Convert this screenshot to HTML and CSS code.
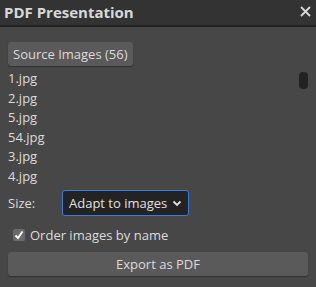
FILE: index.html
```html
<!DOCTYPE html>
<html lang="en">
<head>
<meta charset="UTF-8">
<meta name="viewport" content="width=device-width, initial-scale=1.0">
<title>PDF Presentation</title>
<link rel="stylesheet" href="styles.css">
</head>
<body>
<div class="panel">
    <div class="titlebar">
        <span class="title">PDF Presentation</span>
        <svg class="close" width="11" height="11" viewBox="0 0 11 11"><path d="M1 1L10 10M10 1L1 10" stroke="#d8d8d8" stroke-width="1.8"/></svg>
    </div>
    <div class="content">
        <button class="btn source">Source Images (56)</button>
        <div class="files">
            <div>1.jpg</div>
            <div>2.jpg</div>
            <div>5.jpg</div>
            <div>54.jpg</div>
            <div>3.jpg</div>
            <div>4.jpg</div>
            <span class="thumb"></span>
        </div>
        <div class="row">
            <label class="size-label">Size:</label>
            <div class="select">
                <span>Adapt to images</span>
                <svg width="10" height="7" viewBox="0 0 10 7"><path d="M1.5 1.5L5 5L8.5 1.5" fill="none" stroke="#e0e0e0" stroke-width="1.8"/></svg>
            </div>
        </div>
        <label class="check">
            <span class="box"><svg width="10" height="10" viewBox="0 0 10 10"><path d="M1.5 5.5L4 8L8.5 1.5" fill="none" stroke="#fff" stroke-width="1.8"/></svg></span>
            Order images by name
        </label>
        <button class="btn export">Export as PDF</button>
    </div>
</div>
</body>
</html>
```
FILE: styles.css
```css
body {
    margin: 0;
    background-color: #474747;
    font-family: 'Open Sans', 'DejaVu Sans', sans-serif;
    color: #dcdcdc;
}
.panel {
    width: 316px;
    height: 287px;
    background-color: #474747;
}
.titlebar {
    height: 25px;
    background-color: #333333;
    border-bottom: 2px solid #232323;
    display: flex;
    align-items: center;
    justify-content: space-between;
    padding: 0 5px 0 4px;
}
.title {
    font-weight: bold;
    font-size: 15px;
    color: #d8d8d8;
    margin-top: -2px;
}
.close {
    margin-top: -2px;
}
.content {
    padding: 15px 8px 0 8px;
}
.btn {
    font-family: 'Open Sans', 'DejaVu Sans', sans-serif;
    font-size: 13px;
    color: #dcdcdc;
    background-color: #5a5a5a;
    border: none;
    border-radius: 3px;
    box-shadow: 0 1px 1px #303030;
    height: 24px;
    padding: 0 5px;
}
.source {
    display: block;
}
.files {
    position: relative;
    font-size: 13px;
    line-height: 19.6px;
    margin-top: 3px;
    height: 120px;
}
.thumb {
    position: absolute;
    right: 0;
    top: 3px;
    width: 9px;
    height: 17px;
    border-radius: 4px;
    background-color: #222222;
}
.row {
    display: flex;
    align-items: center;
    margin-top: 1px;
}
.size-label {
    font-size: 13px;
    width: 54px;
}
.select {
    display: flex;
    align-items: center;
    justify-content: space-between;
    width: 113px;
    height: 24px;
    padding: 0 6px;
    background-color: #232323;
    border: 1px solid #3b7be0;
    border-radius: 3px;
    font-size: 13px;
    color: #e0e0e0;
}
.check {
    display: flex;
    align-items: center;
    gap: 5px;
    font-size: 13px;
    margin: 10px 0 0 5px;
}
.box {
    width: 12px;
    height: 12px;
    background-color: #6a6a6a;
    border-radius: 2px;
    display: flex;
    align-items: center;
    justify-content: center;
}
.export {
    display: block;
    width: 100%;
    margin-top: 8px;
}
```
